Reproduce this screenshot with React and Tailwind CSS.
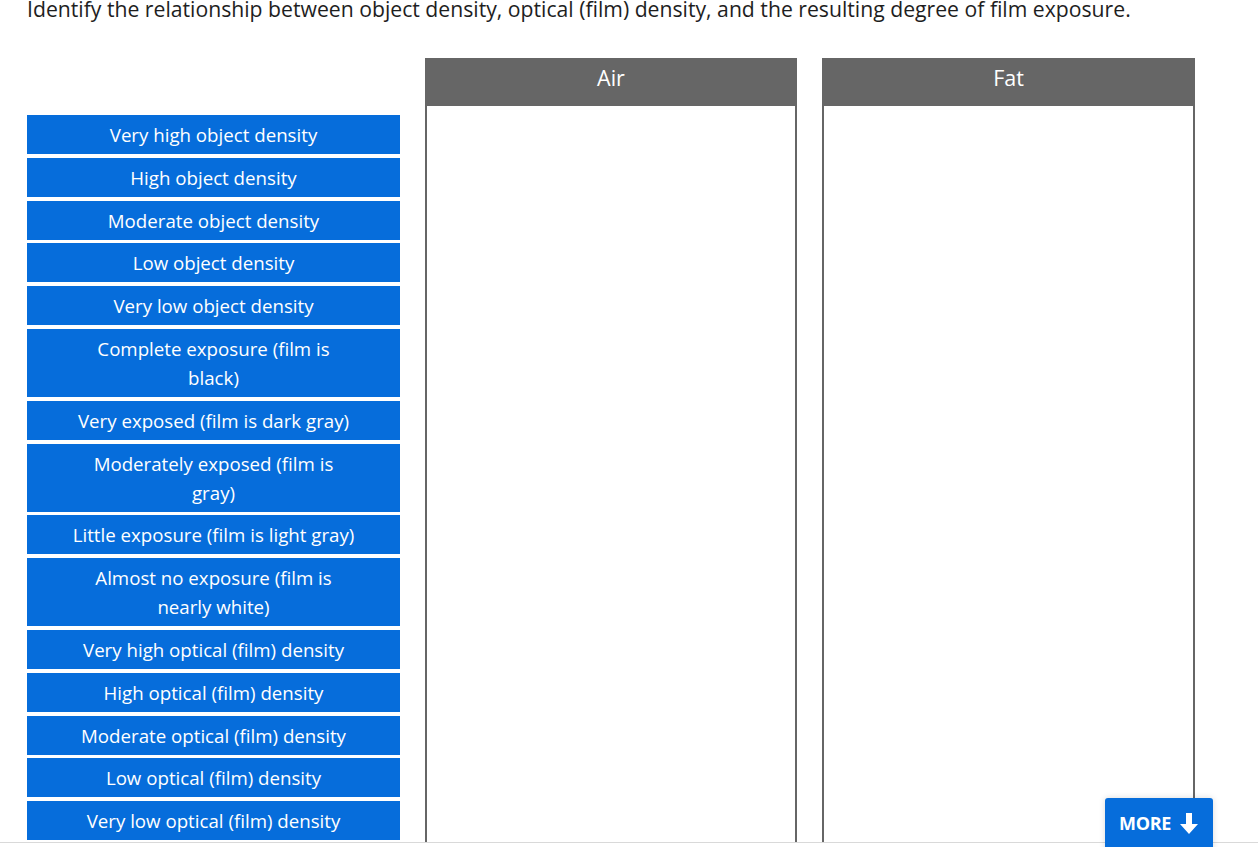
import React from "react";

const items = [
  "Very high object density",
  "High object density",
  "Moderate object density",
  "Low object density",
  "Very low object density",
  "Complete exposure (film is black)",
  "Very exposed (film is dark gray)",
  "Moderately exposed (film is gray)",
  "Little exposure (film is light gray)",
  "Almost no exposure (film is nearly white)",
  "Very high optical (film) density",
  "High optical (film) density",
  "Moderate optical (film) density",
  "Low optical (film) density",
  "Very low optical (film) density",
];

function Column({ title, width }) {
  return (
    <div className={`flex flex-col shrink-0 ${width}`}>
      <div className="h-[48px] bg-[#666666] text-white text-[21.5px] leading-[40px] text-center">
        {title}
      </div>
      <div className="border-x-2 border-[#666666] bg-white h-[900px]"></div>
    </div>
  );
}

export default function App() {
  return (
    <div
      className="relative w-[1258px] h-[847px] overflow-hidden bg-white"
      style={{ fontFamily: '"Open Sans", "Liberation Sans", sans-serif' }}
    >
      <div className="h-[843px] overflow-hidden border-b border-[#d9d9d9] px-[27px]">
        <h1 className="mt-[-6px] text-[21.2px] leading-[30px] font-normal text-[#1e1e1e] whitespace-nowrap">
          Identify the relationship between object density, optical (film) density, and the resulting degree of film exposure.
        </h1>
        <div className="mt-[34px] flex items-start gap-[25px]">
          <div className="w-[373px] shrink-0 pt-[57px] flex flex-col gap-[3.8px]">
            {items.map((t) => (
              <div
                key={t}
                className="bg-[#066ddb] text-white text-[18.7px] leading-[29px] py-[5px] px-[44px] text-center"
              >
                {t}
              </div>
            ))}
          </div>
          <Column title="Air" width="w-[372px]" />
          <Column title="Fat" width="w-[373px]" />
        </div>
      </div>
      <button className="absolute left-[1105px] top-[798px] w-[108px] h-[60px] rounded-t-[3px] bg-[#066ddb] text-white flex items-start justify-center pt-[13px] gap-[8px] shadow-[0_0_6px_rgba(0,0,0,0.15)]">
        <span className="text-[18px] leading-[24px] font-bold tracking-[-0.3px]">MORE</span>
        <svg width="20" height="22" viewBox="0 0 20 22" className="mt-[2px]">
          <path d="M7 0h6v11h6L10 21 1 11h6z" fill="white" />
        </svg>
      </button>
    </div>
  );
}
